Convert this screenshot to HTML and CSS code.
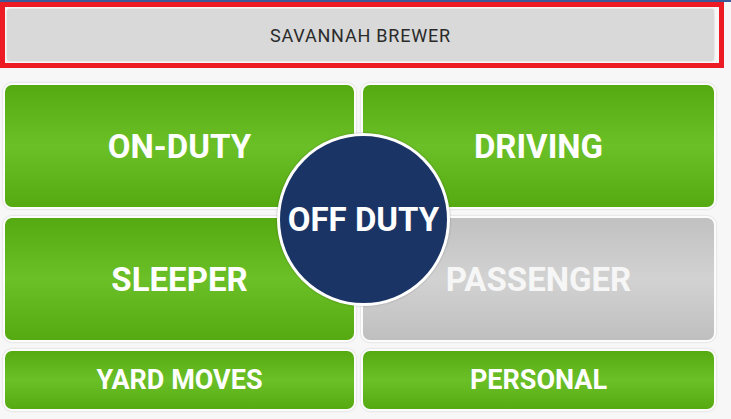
FILE: index.html
```html
<!DOCTYPE html>
<html>
<head>
<meta charset="utf-8">
<link rel="stylesheet" href="styles.css">
</head>
<body>
<div class="topbar"></div>
<div class="header-frame">
  <div class="driver">SAVANNAH BREWER</div>
</div>
<div class="board">
  <div class="btn green big">ON-DUTY</div>
  <div class="btn green big">DRIVING</div>
  <div class="btn green big">SLEEPER</div>
  <div class="btn gray big">PASSENGER</div>
  <div class="btn green small">YARD MOVES</div>
  <div class="btn green small">PERSONAL</div>
  <div class="offduty">OFF DUTY</div>
</div>
</body>
</html>
```
FILE: styles.css
```css
html, body {
  margin: 0;
  padding: 0;
}
body {
  width: 731px;
  height: 419px;
  background: #f7f7f7;
  font-family: Roboto, "Noto Sans", sans-serif;
  overflow: hidden;
}
.topbar {
  height: 2px;
  background: #3c5a99;
}
.header-frame {
  width: 724px;
  height: 66px;
  box-sizing: border-box;
  border: 5px solid #ed1c24;
  padding: 2px 5px 2px 2px;
}
.driver {
  height: 100%;
  background: #d8d9d8;
  border-radius: 3px;
  box-shadow: 0 0 2px rgba(0,0,0,0.18);
  display: flex;
  align-items: center;
  justify-content: center;
  font-size: 18px;
  color: #2a2a2a;
  letter-spacing: 0.8px;
}
.board {
  position: relative;
  display: grid;
  grid-template-columns: 353px 355px;
  grid-template-rows: 126px 126px 62px;
  column-gap: 5px;
  row-gap: 7px;
  padding: 15px 0 0 3px;
}
.btn {
  display: flex;
  align-items: center;
  justify-content: center;
  border: 2px solid #fcfcfc;
  border-radius: 9px;
  box-shadow: 0 0 2px rgba(0,0,0,0.22);
  color: #fff;
  font-weight: 700;
  box-sizing: border-box;
}
.green {
  background: linear-gradient(#55a911, #6bbf27 50%, #55a911);
}
.gray {
  background: linear-gradient(#c1c1c1, #d2d2d2 50%, #bfbfbf);
  color: #f6f6f6;
}
.big {
  font-size: 33px;
}
.small {
  font-size: 27px;
}
.offduty {
  position: absolute;
  left: 277px;
  top: 65px;
  width: 173px;
  height: 173px;
  box-sizing: border-box;
  border: 3px solid #fff;
  border-radius: 50%;
  background: #1a3465;
  color: #fff;
  font-weight: 700;
  font-size: 33px;
  display: flex;
  align-items: center;
  justify-content: center;
  box-shadow: 0 0 2px rgba(0,0,0,0.3);
}
```
